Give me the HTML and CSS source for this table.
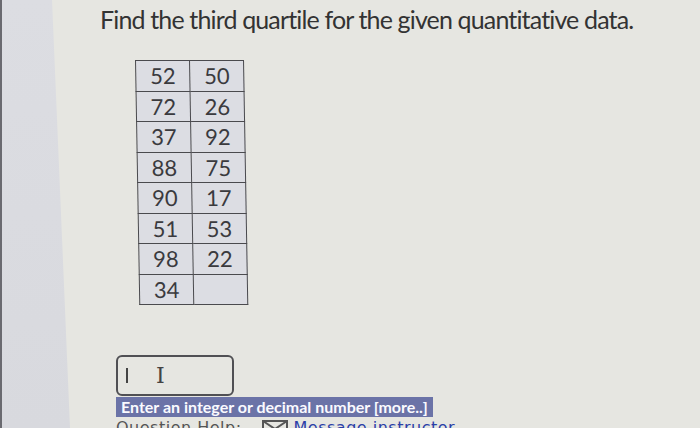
FILE: index.html
```html
<!DOCTYPE html>
<html>
<head>
<meta charset="utf-8">
<link rel="stylesheet" href="styles.css">
</head>
<body>
<div class="page">
  <aside class="side"></aside>
  <main class="main">
    <h1 class="title">Find the third quartile for the given quantitative data.</h1>
    <table class="data">
      <tr><td>52</td><td>50</td></tr>
      <tr><td>72</td><td>26</td></tr>
      <tr><td>37</td><td>92</td></tr>
      <tr><td>88</td><td>75</td></tr>
      <tr><td>90</td><td>17</td></tr>
      <tr><td>51</td><td>53</td></tr>
      <tr><td>98</td><td>22</td></tr>
      <tr><td>34</td><td></td></tr>
    </table>
    <div class="answer">
      <div class="input"><span class="caret"></span><span class="ibeam">I</span></div>
      <div class="tip">Enter an integer or decimal number [more..]</div>
      <div class="help">
        <span class="help-label">Question Help:</span>
        <svg class="env" width="26" height="16" viewBox="0 0 26 16"><rect x="1" y="1" width="24" height="14" fill="none" stroke="#555" stroke-width="2"/><path d="M1 1 L13 9 L25 1" fill="none" stroke="#555" stroke-width="2"/></svg>
        <span class="help-link">Message instructor</span>
      </div>
    </div>
  </main>
</div>
</body>
</html>
```
FILE: styles.css
```css
html, body {
  margin: 0;
  padding: 0;
  height: 100%;
  overflow: hidden;
}
body {
  background: #e6e6e1;
  font-family: Lato, "Liberation Sans", sans-serif;
  color: #333;
}
.page {
  display: flex;
  height: 428px;
}
.side {
  width: 72px;
  flex: none;
  background: linear-gradient(180deg, #dcdde2, #d8d9de);
  border-left: 2px solid #6a6a70;
  clip-path: polygon(0 0, 52px 0, 70px 100%, 0 100%);
}
.main {
  flex: 1;
  padding-left: 26px;
  display: flex;
  flex-direction: column;
  align-items: flex-start;
}
.title {
  margin: 4px 0 0 0;
  font-size: 25px;
  font-weight: normal;
  color: #333;
  letter-spacing: -0.85px;
  white-space: nowrap;
}
.data {
  margin: 26px 0 0 35px;
  border-collapse: collapse;
  transform: skewX(1deg);
  transform-origin: 0 0;
}
.data td {
  width: 53px;
  height: 29.5px;
  padding: 0;
  border: 1.6px solid #4a4a4e;
  background: #dcdde3;
  text-align: center;
  font-size: 22px;
  color: #3a3a3e;
}
.answer {
  margin: 50px 0 0 16px;
  display: flex;
  flex-direction: column;
  align-items: flex-start;
}
.input {
  width: 106px;
  height: 37px;
  border: 2px solid #505054;
  border-radius: 6px;
  display: flex;
  align-items: center;
  padding-left: 8px;
  gap: 28px;
  box-sizing: content-box;
}
.caret {
  width: 2px;
  height: 15px;
  background: #444;
}
.ibeam {
  font-family: "DejaVu Serif", serif;
  font-size: 22px;
  color: #444;
}
.tip {
  margin-top: 1px;
  background: #6b73a7;
  color: #fafaff;
  font-family: Lato, sans-serif;
  font-weight: bold;
  font-size: 16px;
  line-height: 20px;
  padding: 0 5px 0 5px;
}
.help {
  display: flex;
  align-items: flex-start;
  gap: 18px;
  margin-top: 1px;
  line-height: 20px;
}
.help-label {
  color: #555;
  font-family: "DejaVu Sans", sans-serif;
  font-size: 16px;
  letter-spacing: 0.5px;
}
.help-link {
  color: #2b3fa8;
  font-family: "DejaVu Sans", sans-serif;
  font-size: 16px;
  letter-spacing: 0.5px;
}
.env {
  margin-left: 2px;
  margin-right: -12px;
  margin-top: 2px;
}
```
